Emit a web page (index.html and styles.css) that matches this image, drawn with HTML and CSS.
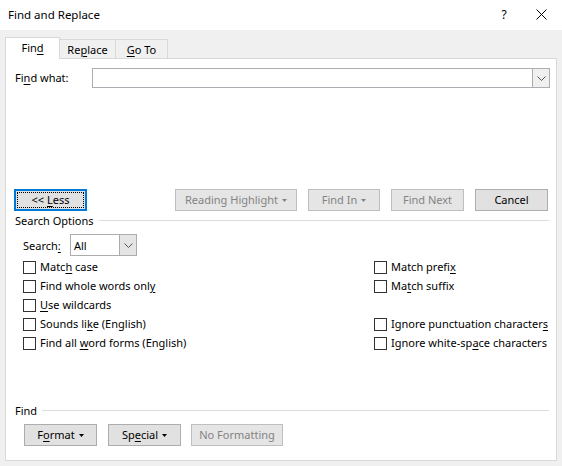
FILE: index.html
```html
<!DOCTYPE html>
<html>
<head>
<meta charset="utf-8">
<link rel="stylesheet" href="styles.css">
</head>
<body>
<div class="window">
  <div class="titlebar">
    <span class="title">Find and Replace</span>
    <span class="help">?</span>
    <span class="close"><svg width="11" height="11" viewBox="0 0 11 11"><path d="M0.5 0.5L10.5 10.5M10.5 0.5L0.5 10.5" stroke="#000" stroke-width="1"/></svg></span>
  </div>
  <div class="tabs">
    <div class="tab selected"><span>Fin<u>d</u></span></div>
    <div class="tab"><span>Re<u>p</u>lace</span></div>
    <div class="tab"><span><u>G</u>o To</span></div>
  </div>
  <div class="panel">
    <div class="findrow">
      <label class="findlabel">Fi<u>n</u>d what:</label>
      <div class="combo">
        <div class="combo-text"></div>
        <div class="combo-btn"><svg width="9" height="5" viewBox="0 0 9 5"><path d="M0.5 0.5L4.5 4.5L8.5 0.5" fill="none" stroke="#555" stroke-width="1"/></svg></div>
      </div>
    </div>
    <div class="btnrow">
      <button class="btn focus"><span class="focusrect"><span>&lt;&lt; <u>L</u>ess</span></span></button>
      <div class="btngroup">
        <button class="btn disabled w-rh"><span>Reading Highlight</span><svg class="tri" width="5" height="3" viewBox="0 0 5 3"><path d="M0 0H5L2.5 3Z" fill="#838383"/></svg></button>
        <button class="btn disabled w-72"><span>Find In</span><svg class="tri" width="5" height="3" viewBox="0 0 5 3"><path d="M0 0H5L2.5 3Z" fill="#838383"/></svg></button>
        <button class="btn disabled"><span>Find Next</span></button>
        <button class="btn"><span>Cancel</span></button>
      </div>
    </div>
    <div class="group-head"><span>Search Options</span><div class="rule"></div></div>
    <div class="searchrow">
      <span class="searchlabel">Search<u>:</u></span>
      <div class="select">
        <span class="select-text">All</span>
        <div class="select-btn"><svg width="9" height="5" viewBox="0 0 9 5"><path d="M0.5 0.5L4.5 4.5L8.5 0.5" fill="none" stroke="#555" stroke-width="1"/></svg></div>
      </div>
    </div>
    <div class="checks">
      <div class="check"><span class="box"></span><span class="lbl">Matc<u>h</u> case</span></div>
      <div class="check"><span class="box"></span><span class="lbl">Match prefi<u>x</u></span></div>
      <div class="check"><span class="box"></span><span class="lbl">Find whole words onl<u>y</u></span></div>
      <div class="check"><span class="box"></span><span class="lbl">Ma<u>t</u>ch suffix</span></div>
      <div class="check"><span class="box"></span><span class="lbl"><u>U</u>se wildcards</span></div>
      <div class="check empty"></div>
      <div class="check"><span class="box"></span><span class="lbl">Sounds li<u>k</u>e (English)</span></div>
      <div class="check"><span class="box"></span><span class="lbl">Ignore punctuation character<u>s</u></span></div>
      <div class="check"><span class="box"></span><span class="lbl">Find all <u>w</u>ord forms (English)</span></div>
      <div class="check"><span class="box"></span><span class="lbl">Ignore white-sp<u>a</u>ce characters</span></div>
    </div>
    <div class="group-head find-head"><span>Find</span><div class="rule"></div></div>
    <div class="fmtrow">
      <button class="btn"><span>F<u>o</u>rmat</span><svg class="tri" width="5" height="3" viewBox="0 0 5 3"><path d="M0 0H5L2.5 3Z" fill="#000"/></svg></button>
      <button class="btn"><span>Sp<u>e</u>cial</span><svg class="tri" width="5" height="3" viewBox="0 0 5 3"><path d="M0 0H5L2.5 3Z" fill="#000"/></svg></button>
      <button class="btn disabled w-nf"><span>No Formatting</span></button>
    </div>
  </div>
</div>
</body>
</html>
```

FILE: styles.css
```css
* { box-sizing: border-box; }
html, body { margin: 0; padding: 0; }
body {
  width: 562px;
  height: 466px;
  background: #f0f0f0;
  font-family: "Noto Sans", "Open Sans", sans-serif;
  font-size: 11px;
  color: #000;
  overflow: hidden;
}
u { text-decoration: underline; text-underline-offset: 2px; }

.titlebar {
  height: 30px;
  background: #fff;
  display: flex;
  align-items: center;
  padding-left: 8px;
  padding-bottom: 2px;
}
.title { flex: 1; font-size: 11.5px; }
.help { width: 14px; margin-right: 25px; text-align: center; font-size: 12px; }
.close { width: 11px; height: 11px; margin-right: 15px; display: flex; margin-top: 1px; }

.tabs {
  display: flex;
  align-items: flex-end;
  margin-top: 7px;
  padding-left: 5px;
  height: 21px;
}
.tab {
  height: 19px;
  border-top: 1px solid #d9d9d9;
  border-right: 1px solid #d9d9d9;
  background: #f0f0f0;
  display: flex;
  align-items: center;
  justify-content: center;
  line-height: 1;
}
.tab:nth-child(2) { width: 56px; }
.tab:nth-child(3) { width: 52px; }
.tab.selected {
  width: 55px;
  height: 22px;
  margin-bottom: -1px;
  background: #fff;
  border-left: 1px solid #d9d9d9;
  position: relative;
  z-index: 1;
  padding-bottom: 2px;
}

.panel {
  margin-left: 5px;
  width: 552px;
  height: 403px;
  background: #fff;
  border: 1px solid #d9d9d9;
  padding: 9px 6px 0 8px;
  display: flex;
  flex-direction: column;
}

.findrow { display: flex; align-items: center; height: 20px; }
.findlabel { width: 78px; padding-left: 1px; padding-bottom: 1px; }
.combo {
  flex: 1;
  height: 20px;
  border: 1px solid #abadb3;
  display: flex;
  justify-content: flex-end;
}
.combo-text { flex: 1; }
.combo-btn {
  width: 17px;
  height: 18px;
  border-left: 1px solid #acacac;
  background: #f0f0f0;
  display: flex;
  align-items: center;
  justify-content: center;
}

.btnrow {
  margin-top: 101px;
  display: flex;
  height: 22px;
  padding-right: 2px;
}
.btngroup { margin-left: auto; display: flex; gap: 11px; }
.btn {
  font-family: inherit;
  font-size: 11px;
  color: #000;
  width: 73px;
  height: 22px;
  background: #e1e1e1;
  border: 1px solid #adadad;
  padding: 0 0 2px 0;
  margin: 0;
  display: flex;
  align-items: center;
  justify-content: center;
  gap: 4px;
  line-height: 1;
  white-space: pre;
}
.btn.disabled { color: #838383; border-color: #bfbfbf; background: #e5e5e5; }
.btn.focus { border: 2px solid #0078d7; padding: 1px; }
.focusrect {
  flex: 1;
  align-self: stretch;
  border: 1px dotted #000;
  display: flex;
  align-items: center;
  justify-content: center;
  padding-bottom: 1px;
}
.w-rh { width: 122px; }
.w-72 { width: 72px; }
.w-nf { width: 92px; }
.tri { margin-top: 2px; }

.group-head {
  margin-top: 3px;
  height: 14px;
  display: flex;
  align-items: center;
  padding-left: 1px;
  padding-right: 1px;
  line-height: 14px;
}
.group-head span { margin-top: -1px; }
.group-head .rule { flex: 1; height: 1px; background: #dcdcdc; margin-left: 5px; margin-top: -1px; }
.find-head { margin-top: 51px; }

.searchrow {
  margin-top: 6px;
  display: flex;
  align-items: center;
  height: 22px;
  padding-left: 9px;
}
.searchlabel { width: 47px; }
.select {
  width: 67px;
  height: 22px;
  border: 1px solid #acacac;
  display: flex;
  align-items: center;
}
.select-text { flex: 1; padding-left: 3px; }
.select-btn {
  width: 17px;
  height: 20px;
  border-left: 1px solid #acacac;
  background: #e5e5e5;
  display: flex;
  align-items: center;
  justify-content: center;
}

.checks {
  margin-top: 2px;
  display: grid;
  grid-template-columns: 351px 1fr;
  grid-auto-rows: 19px;
  padding-left: 9px;
}
.check { display: flex; align-items: center; white-space: nowrap; }
.lbl { padding-bottom: 2px; }
.box {
  width: 13px;
  height: 13px;
  border: 1px solid #333;
  background: #fff;
  margin-right: 4px;
  flex: none;
}

.fmtrow {
  margin-top: 6px;
  display: flex;
  padding-left: 10px;
  gap: 11px;
}
.fmtrow .btn:nth-child(3) { margin-left: -1px; }
```
